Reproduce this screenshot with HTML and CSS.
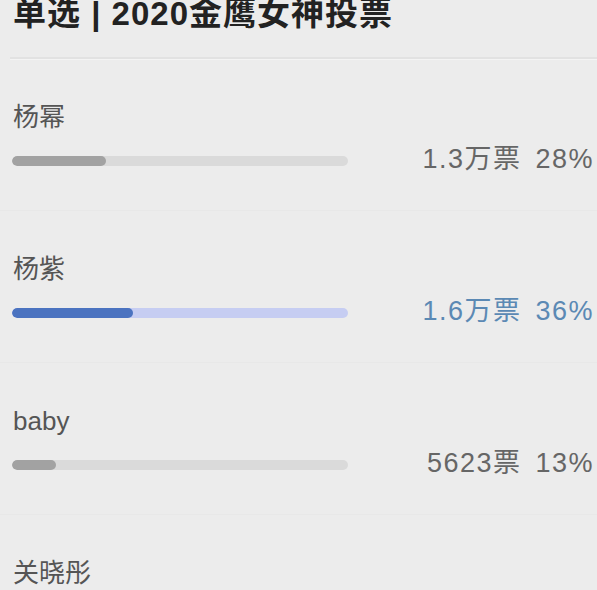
FILE: index.html
```html
<!DOCTYPE html>
<html lang="zh-CN">
<head>
<meta charset="utf-8">
<link rel="stylesheet" href="styles.css">
</head>
<body>
<div class="poll">
  <div class="poll-head">
    <h1 class="poll-title">单选 | 2020金鹰女神投票</h1>
  </div>
  <div class="option">
    <div class="option-name">杨幂</div>
    <div class="option-row">
      <div class="bar"><div class="bar-fill" style="width:28%"></div></div>
      <div class="option-value"><span class="votes">1.3万票</span><span class="pct">28%</span></div>
    </div>
  </div>
  <div class="option option-chosen">
    <div class="option-name">杨紫</div>
    <div class="option-row">
      <div class="bar"><div class="bar-fill" style="width:36%"></div></div>
      <div class="option-value"><span class="votes">1.6万票</span><span class="pct">36%</span></div>
    </div>
  </div>
  <div class="option">
    <div class="option-name">baby</div>
    <div class="option-row">
      <div class="bar"><div class="bar-fill" style="width:13%"></div></div>
      <div class="option-value"><span class="votes">5623票</span><span class="pct">13%</span></div>
    </div>
  </div>
  <div class="option">
    <div class="option-name">关晓彤</div>
  </div>
</div>
</body>
</html>
```
FILE: styles.css
```css
html, body {
  margin: 0;
  padding: 0;
  background: #ececec;
}
body {
  font-family: "Liberation Sans", "Noto Sans CJK SC", sans-serif;
  overflow: hidden;
}
.poll {
  display: flex;
  flex-direction: column;
}
.poll-head {
  height: 57px;
  margin-left: 10px;
  border-bottom: 2px solid #e2e2e2;
  box-shadow: 0 1px 0 #f4f4f4;
  overflow: hidden;
}
.poll-title {
  margin: -4px 0 0 3px;
  font-size: 33px;
  line-height: 36px;
  font-weight: bold;
  color: #222;
  letter-spacing: 1px;
}
.option {
  padding: 43px 3px 36px 12px;
  border-bottom: 1px solid #e8e8e8;
  display: flex;
  flex-direction: column;
  gap: 12px;
}
.option-name {
  font-size: 26px;
  line-height: 30px;
  color: #555;
  padding-left: 1px;
}
.option-row {
  display: flex;
  align-items: center;
  justify-content: space-between;
  height: 30px;
}
.bar {
  width: 336px;
  height: 10px;
  border-radius: 5px;
  background: #dadada;
  overflow: hidden;
  margin-top: 4px;
}
.bar-fill {
  height: 100%;
  border-radius: 5px;
  background: #a2a2a2;
}
.option-value {
  font-size: 27px;
  line-height: 30px;
  color: #666;
  letter-spacing: 1.5px;
  display: flex;
}
.pct {
  margin-left: 14px;
}
.option-chosen .bar {
  background: #c6cdf2;
}
.option-chosen .bar-fill {
  background: #4b73c0;
}
.option-chosen .option-value {
  color: #5b89b4;
}
```
